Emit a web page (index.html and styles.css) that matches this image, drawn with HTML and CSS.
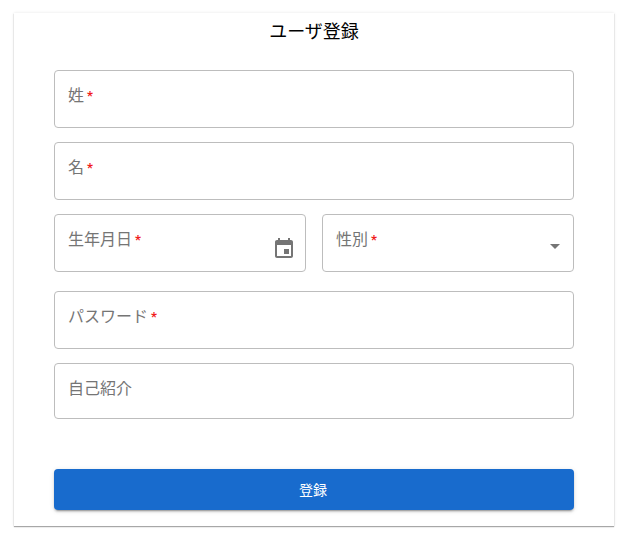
FILE: index.html
```html
<!DOCTYPE html>
<html lang="ja">
<head>
    <meta charset="UTF-8">
    <meta name="viewport" content="width=device-width, initial-scale=1.0">
    <title>ユーザ登録</title>
    <link rel="stylesheet" href="styles.css">
</head>
<body>
    <div class="card">
        <div class="card-title">ユーザ登録</div>
        <form class="user-form">
            <div class="field">
                <span class="label">姓<span class="req">*</span></span>
            </div>
            <div class="field">
                <span class="label">名<span class="req">*</span></span>
            </div>
            <div class="row">
                <div class="field">
                    <span class="label">生年月日<span class="req">*</span></span>
                    <svg class="calendar" viewBox="0 0 24 24" width="24" height="24">
                        <path d="M17 12h-5v5h5v-5zM16 1v2H8V1H6v2H5c-1.11 0-1.99.9-1.99 2L3 19c0 1.1.89 2 2 2h14c1.1 0 2-.9 2-2V5c0-1.1-.9-2-2-2h-1V1h-2zm3 18H5V8h14v11z"/>
                    </svg>
                </div>
                <div class="field">
                    <span class="label">性別<span class="req">*</span></span>
                    <span class="arrow"></span>
                </div>
            </div>
            <div class="field">
                <span class="label">パスワード<span class="req">*</span></span>
            </div>
            <div class="field field-short">
                <span class="label">自己紹介</span>
            </div>
            <button class="submit" type="button">登録</button>
        </form>
    </div>
</body>
</html>
```

FILE: styles.css
```css
body {
    font-family: Roboto, "Noto Sans CJK JP", sans-serif;
    margin: 0;
    padding-bottom: 13px;
    background-color: #fff;
}
.card {
    box-sizing: border-box;
    width: 600px;
    height: 513px;
    margin: 13px 0 0 14px;
    background-color: #fff;
    box-shadow: 0 1px 1px rgba(0, 0, 0, 0.32), 0 0 3px rgba(0, 0, 0, 0.1);
}
.card-title {
    font-size: 18px;
    line-height: 38px;
    text-align: center;
    color: #000;
}
.user-form {
    display: flex;
    flex-direction: column;
    gap: 14px;
    margin: 19px 40px 0;
}
.row {
    display: flex;
    gap: 16px;
    margin-bottom: 5px;
}
.row .field {
    flex: 1;
}
.field {
    position: relative;
    box-sizing: border-box;
    height: 58px;
    padding: 14px 13px;
    background-color: #fff;
    border: 1px solid #bdbdbd;
    border-radius: 4px;
}
.field-short {
    height: 56px;
}
.label {
    font-size: 16px;
    line-height: 22px;
    color: #757575;
}
.req {
    margin-left: 3px;
    font-size: 13px;
    font-weight: 700;
    color: #f01c1c;
    position: relative;
    top: -1px;
}
.calendar {
    position: absolute;
    right: 9px;
    top: 22px;
    fill: #757575;
}
.arrow {
    position: absolute;
    right: 13px;
    top: 29px;
    width: 0;
    height: 0;
    border-left: 5px solid transparent;
    border-right: 5px solid transparent;
    border-top: 5px solid #757575;
}
.submit {
    height: 41px;
    margin-top: 36px;
    padding: 0 2px 1px 0;
    font-family: inherit;
    font-size: 14px;
    color: #fff;
    background-color: #186bcd;
    border: none;
    border-radius: 4px;
    box-shadow: 0 3px 1px -2px rgba(0, 0, 0, 0.2), 0 2px 2px 0 rgba(0, 0, 0, 0.14), 0 1px 5px 0 rgba(0, 0, 0, 0.12);
}
```
